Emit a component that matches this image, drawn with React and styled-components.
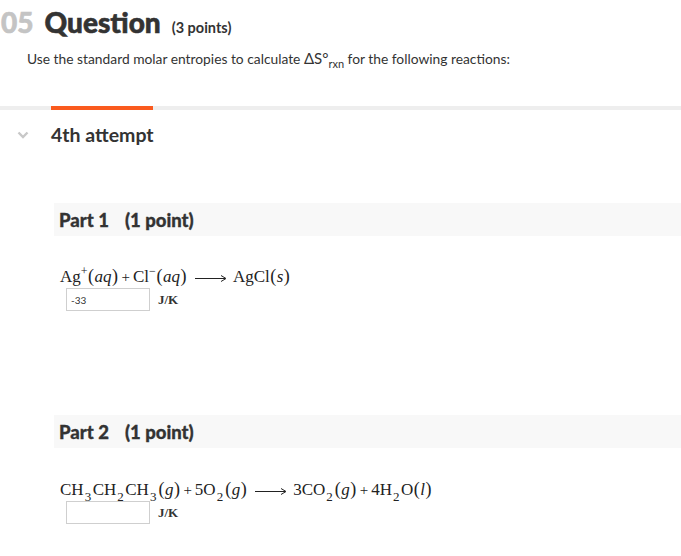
import React from 'react';
import styled, { createGlobalStyle } from 'styled-components';

const GlobalStyle = createGlobalStyle`
body{
    margin:0;
    background:white;
    font-family:Lato, "Open Sans", sans-serif;
    color:#333;
}
`;

const Page = styled.div`
width:681px;
`;

const Header = styled.h1`
margin:0;
padding-top:5px;
font-size:28px;
line-height:34px;
font-weight:900;
color:#333;
display:flex;
align-items:baseline;
-webkit-text-stroke:0.6px #333;
`;

const Number = styled.span`
color:#c4c4c4;
-webkit-text-stroke:0.6px #c4c4c4;
margin-left:1px;
margin-right:11px;
`;

const Points = styled.span`
font-size:14.5px;
font-weight:700;
margin-left:11px;
-webkit-text-stroke:0;
`;

const Prompt = styled.p`
margin:4px 0 0 27px;
font-size:13.8px;
line-height:18px;
`;

const Delta = styled.span`
font-size:15px;
`;

const PromptSub = styled.sub`
font-size:11px;
vertical-align:-4px;
line-height:0;
`;

const Tabs = styled.div`
margin-top:38px;
height:4px;
background:#eeeeee;
`;

const ActiveTab = styled.div`
margin-left:51px;
width:102px;
height:4px;
background:#fa5a1e;
`;

const Attempt = styled.div`
display:flex;
align-items:center;
margin-top:14px;
font-size:19.5px;
font-weight:700;
line-height:22px;
`;

const Chevron = styled.span`
width:51px;
display:flex;
padding-left:17px;
box-sizing:border-box;
`;

const PartBar = styled.div`
margin-left:54px;
margin-top:${p => p.$top}px;
height:33px;
background:#f8f8f8;
display:flex;
align-items:center;
padding-left:5px;
font-size:18.5px;
font-weight:900;
color:#333;
-webkit-text-stroke:0.3px #333;
`;

const PartPoints = styled.span`
margin-left:16px;
`;

const Body = styled.div`
margin-left:60px;
margin-top:${p => p.$top}px;
`;

const Equation = styled.div`
font-family:"Liberation Serif", "DejaVu Serif", serif;
font-size:17px;
line-height:22px;
color:#222;
white-space:nowrap;
`;

const Sup = styled.sup`
font-size:12px;
vertical-align:7px;
line-height:0;
`;

const Sub = styled.sub`
font-size:13px;
vertical-align:-6px;
line-height:0;
margin:0 1.5px 0 1px;
`;

const Ital = styled.i``;

const Paren = styled.span`
margin:0 0.5px;
font-size:18px;
`;

const Op = styled.span`
margin:0 3px;
font-size:15px;
`;

const Arrow = styled.svg`
margin:0 6px 0 8px;
vertical-align:middle;
`;

const AnswerRow = styled.div`
display:flex;
align-items:center;
`;

const Input = styled.div`
margin-left:6px;
width:84px;
height:23px;
border:1px solid #cfcfcf;
box-sizing:border-box;
font-family:Lato, sans-serif;
font-size:10px;
color:#333;
display:flex;
align-items:center;
padding-left:4px;
`;

const Unit = styled.span`
margin-left:8px;
font-family:"Liberation Serif", serif;
font-size:13px;
font-weight:700;
color:#333;
`;

function LongArrow() {
    return <Arrow width="32" height="10" viewBox="0 0 32 10">
        <path d="M0 5.5 H30" stroke="#222" strokeWidth="1" />
        <path d="M26 2.5 L31 5.5 L26 8.5" fill="none" stroke="#222" strokeWidth="1" />
    </Arrow>;
}

function State({ s }) {
    return <><Paren>(</Paren><Ital>{s}</Ital><Paren>)</Paren></>;
}

export default function App() {
    return <Page>
        <GlobalStyle />
        <Header><Number>05</Number>Question<Points>(3 points)</Points></Header>
        <Prompt>Use the standard molar entropies to calculate <Delta>ΔS°</Delta><PromptSub>rxn</PromptSub> for the following reactions:</Prompt>
        <Tabs><ActiveTab /></Tabs>
        <Attempt>
            <Chevron>
                <svg width="12" height="8" viewBox="0 0 12 8">
                    <path d="M1.5 1.5 L6 6 L10.5 1.5" fill="none" stroke="#c8c8c8" strokeWidth="2.4" />
                </svg>
            </Chevron>
            4th attempt
        </Attempt>

        <PartBar $top={57}>Part 1<PartPoints>(1 point)</PartPoints></PartBar>
        <Body $top={29}>
            <Equation>
                Ag<Sup>+</Sup><State s="aq" /><Op>+</Op>Cl<Sup>−</Sup><State s="aq" />
                <LongArrow />AgCl<State s="s" />
            </Equation>
            <AnswerRow><Input>-33</Input><Unit>J/K</Unit></AnswerRow>
        </Body>

        <PartBar $top={104}>Part 2<PartPoints>(1 point)</PartPoints></PartBar>
        <Body $top={30}>
            <Equation>
                CH<Sub>3</Sub>CH<Sub>2</Sub>CH<Sub>3</Sub><State s="g" /><Op>+</Op>5O<Sub>2</Sub><State s="g" />
                <LongArrow />3CO<Sub>2</Sub><State s="g" /><Op>+</Op>4H<Sub>2</Sub>O<State s="l" />
            </Equation>
            <AnswerRow><Input /><Unit>J/K</Unit></AnswerRow>
        </Body>
    </Page>;
}
